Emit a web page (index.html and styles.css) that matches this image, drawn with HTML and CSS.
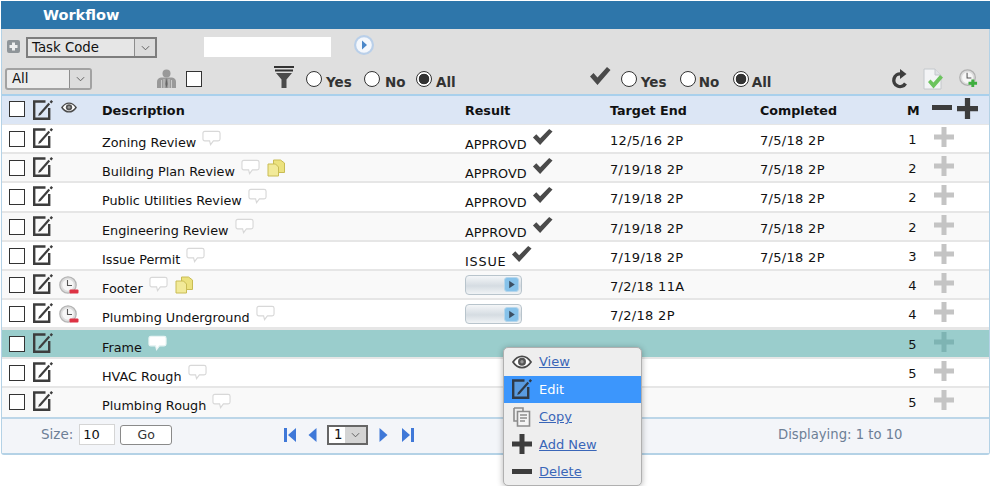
FILE: index.html
```html
<!DOCTYPE html>
<html lang="en">
<head>
<meta charset="utf-8">
<title>Workflow</title>
<link rel="stylesheet" href="styles.css">
</head>
<body>
<svg class="defs" width="0" height="0" aria-hidden="true">
  <defs>
    <symbol id="edit" viewBox="0 0 20 20">
      <path d="M12.500 1.500H1.200v17.300h15V8" fill="none" stroke="#3d3d3d" stroke-width="2.400"/>
      <path d="M6 13.500 15.500 2.800l1.600 1.400L7.600 15l-2.400 1z" fill="#3d3d3d"/>
      <rect x="17.200" y="0.300" width="2.400" height="2.400" fill="#3d3d3d" transform="rotate(40 18 1.500)"/>
    </symbol>
    <symbol id="editblue" viewBox="0 0 20 20">
      <rect x="1.200" y="1.500" width="15" height="17.300" fill="#5a9be0"/>
      <path d="M12.500 1.500H1.200v17.300h15V8" fill="none" stroke="#2f3a48" stroke-width="2.400"/>
      <path d="M6 13.500 15.500 2.800l1.600 1.400L7.600 15l-2.400 1z" fill="#2f3a48"/>
      <rect x="17.200" y="0.300" width="2.400" height="2.400" fill="#2f3a48" transform="rotate(40 18 1.500)"/>
    </symbol>
    <symbol id="eye" viewBox="0 0 20 14">
      <path d="M1 7c2.500-3.800 5.500-5.600 9-5.600S16.500 3.200 19 7c-2.500 3.800-5.500 5.600-9 5.600S3.500 10.800 1 7z" fill="#fff" stroke="#4a4a4a" stroke-width="1.800"/>
      <circle cx="10" cy="6.800" r="4" fill="#555"/>
      <circle cx="10" cy="6.800" r="1.700" fill="#999"/>
    </symbol>
    <symbol id="bubble" viewBox="0 0 20 16">
      <path d="M3 1h14q2 0 2 2v6q0 2-2 2h-5l-3 4-1-4H3q-2 0-2-2V3q0-2 2-2z" fill="#fff" stroke="#d8d8d8" stroke-width="1.200"/>
    </symbol>
    <symbol id="bubblew" viewBox="0 0 20 16">
      <path d="M3 1h14q2 0 2 2v6q0 2-2 2h-5l-3 4-1-4H3q-2 0-2-2V3q0-2 2-2z" fill="#fff" stroke="#e8f4f3" stroke-width="1.200"/>
    </symbol>
    <symbol id="notes" viewBox="0 0 18 18">
      <path d="M6.500 1h7l4 3v9.500h-11z" fill="#ece27e" stroke="#c9bc55"/>
      <path d="M1 5h7.500l3 3v9H1z" fill="#f2ea99" stroke="#c9bc55"/>
    </symbol>
    <symbol id="check" viewBox="0 0 22 20" preserveAspectRatio="none">
      <path d="M1 10.500 4.500 7l4 4.500L18 1l3.500 3L8.500 19z" fill="#4a4a4a"/>
    </symbol>
    <symbol id="plus" viewBox="0 0 20 20">
      <path d="M7.500 0h5v7.500H20v5h-7.500V20h-5v-7.500H0v-5h7.500z"/>
    </symbol>
    <symbol id="clockminus" viewBox="0 0 20 20">
      <circle cx="9" cy="9" r="8.200" fill="#dcdcdc" stroke="#b5b5b5" stroke-width="1.300"/>
      <circle cx="9" cy="9" r="5.800" fill="#f6f6f6"/>
      <path d="M8.500 4v5.500H13" fill="none" stroke="#555" stroke-width="1.100"/>
      <rect x="10.500" y="13.500" width="9" height="4" rx="1" fill="#dd3344"/>
    </symbol>
    <symbol id="clockplus" viewBox="0 0 20 20">
      <circle cx="9" cy="9" r="8.200" fill="#dcdcdc" stroke="#b0b0b0" stroke-width="1.300"/>
      <circle cx="9" cy="9" r="5.800" fill="#f6f6f6"/>
      <path d="M8.500 4v5.500H13" fill="none" stroke="#555" stroke-width="1.100"/>
      <path d="M13 11h3v2.500h3v3h-3V19h-3v-2.500h-3v-3h3z" fill="#3eae3e"/>
    </symbol>
    <symbol id="playmini" viewBox="0 0 16 16">
      <rect x="0.500" y="0.500" width="15" height="15" rx="3" fill="#86c2ea" stroke="#b5d6ec"/>
      <path d="M5.500 4v8l6-4z" fill="#3b4f63"/>
    </symbol>
    <symbol id="copy" viewBox="0 0 18 20">
      <path d="M1 1h9v3M1 1v13h3" fill="none" stroke="#8c8c8c" stroke-width="1.600"/>
      <path d="M4.500 4.500h12V19h-12z" fill="#f4f4f4" stroke="#8c8c8c" stroke-width="1.600"/>
      <path d="M7 8h7M7 11h7M7 14h5" stroke="#8c8c8c" stroke-width="1.300"/>
    </symbol>
    <symbol id="pfirst" viewBox="0 0 14 16">
      <path d="M1 1h3v14H1zM13 1v14L5 8z" fill="#3f78d8"/>
    </symbol>
    <symbol id="pprev" viewBox="0 0 9 16">
      <path d="M8.500 1v14L.5 8z" fill="#3f78d8"/>
    </symbol>
    <symbol id="pnext" viewBox="0 0 9 16">
      <path d="M.5 1v14l8-7z" fill="#3f78d8"/>
    </symbol>
    <symbol id="plast" viewBox="0 0 14 16">
      <path d="M13 1h-3v14h3zM1 1v14l8-7z" fill="#3f78d8"/>
    </symbol>
    <symbol id="chev" viewBox="0 0 10 6">
      <path d="M1 1l4 4 4-4" fill="none" stroke="#555" stroke-width="1"/>
    </symbol>
  </defs>
</svg>

<main class="panel">
  <h1 class="title">Workflow</h1>

  <section class="toolbar">
    <div class="bar bar-top">
      <svg class="ic-addbox" viewBox="0 0 13 13"><rect width="13" height="13" rx="2" fill="#8f9599"/><path d="M5 2.500h3V5h2.500v3H8v2.500H5V8H2.500V5H5z" fill="#f0f0f0"/></svg>
      <div class="select select-code"><span class="select-val">Task Code</span><span class="select-arrow"><svg class="chev"><use href="#chev"/></svg></span></div>
      <input class="search" type="text" aria-label="Search">
      <svg class="ic-go" viewBox="0 0 20 20"><circle cx="10" cy="10" r="10" fill="#b9cfe9"/><circle cx="10" cy="10" r="7.800" fill="#f4f7fc"/><path d="M8 5.500v9l5-4.500z" fill="#4a86c8"/></svg>
    </div>
    <div class="bar bar-bottom">
      <div class="select select-all"><span class="select-val">All</span><span class="select-arrow"><svg class="chev"><use href="#chev"/></svg></span></div>
      <svg class="ic-person" viewBox="0 0 19 20"><circle cx="9.500" cy="4.500" r="4" fill="#999"/><path d="M0 19v-6q0-4 4-4.500h11q4 .5 4 4.500v6z" fill="#999"/><path d="M4.500 11v8M7 10v9M12 10v9M14.500 11v8" stroke="#d5d5d5" stroke-width=".8"/><path d="M9.500 9l-1 6 1 4 1-4z" fill="#666"/></svg>
      <input class="cb cb-person" type="checkbox" aria-label="Mine">
      <svg class="ic-funnel" viewBox="0 0 20 22"><path d="M0 0h20v2H0zM1 3.500h18v2H1z" fill="#333"/><path d="M2 7h16l-5.500 6.500V22h-5v-8.500z" fill="#4a4a4a"/></svg>
      <div class="radios radios-a">
        <input class="rd" type="radio" name="f1" aria-label="Yes"><b class="rl rl-yes">Yes</b>
        <input class="rd" type="radio" name="f1" aria-label="No"><b class="rl rl-no">No</b>
        <input class="rd" type="radio" name="f1" aria-label="All" checked><b class="rl">All</b>
      </div>
      <svg class="ic-bigcheck"><use href="#check"/></svg>
      <div class="radios radios-b">
        <input class="rd" type="radio" name="f2" aria-label="Yes"><b class="rl rl-yes2">Yes</b>
        <input class="rd" type="radio" name="f2" aria-label="No"><b class="rl rl-no2">No</b>
        <input class="rd" type="radio" name="f2" aria-label="All" checked><b class="rl rl-all2">All</b>
      </div>
      <div class="tools">
        <svg class="ic-refresh" viewBox="0 0 18 20"><path d="M14.500 14.500A6.300 6.300 0 1 1 10 5" fill="none" stroke="#3d3d3d" stroke-width="3.400"/><path d="M9 0v10l6.500-5z" fill="#3d3d3d"/></svg>
        <svg class="ic-doc" viewBox="0 0 20 22"><path d="M1 1h11l6 6v14H1z" fill="#f3f4f6" stroke="#c4c8cc"/><path d="M12 1v6h6" fill="#dfe2e6" stroke="#c4c8cc"/><path d="M5 14l2.500-2.500 3 3L17 7l3 2.500-9.500 11z" fill="#6cc45e"/></svg>
        <svg class="ic-clockplus"><use href="#clockplus"/></svg>
      </div>
    </div>
  </section>

  <div class="row head">
    <span class="c-cb"><input class="cb" type="checkbox" aria-label="All rows"></span>
    <svg class="ic-edit"><use href="#edit"/></svg>
    <span class="c-x"><svg class="ic-eye"><use href="#eye"/></svg></span>
    <span class="c-desc">Description</span>
    <span class="c-res">Result</span>
    <span class="c-end">Target End</span>
    <span class="c-done">Completed</span>
    <span class="c-m">M</span>
    <span class="c-exp">
      <svg class="ic-minus" viewBox="0 0 20 6"><rect width="20" height="5" fill="#3d3d3d"/></svg>
      <svg class="ic-plus dark"><use href="#plus"/></svg>
    </span>
  </div>

  <div class="row">
    <span class="c-cb"><input class="cb" type="checkbox" aria-label="Select"></span>
    <svg class="ic-edit"><use href="#edit"/></svg><span class="c-x"></span>
    <span class="c-desc"><span class="desc-t">Zoning Review</span><svg class="ic-bub"><use href="#bubble"/></svg></span>
    <span class="c-res"><span class="res-t">APPROVD</span><svg class="ic-check"><use href="#check"/></svg></span>
    <span class="c-end">12/5/16 2P</span><span class="c-done">7/5/18 2P</span><span class="c-m">1</span>
    <span class="c-exp"><svg class="ic-plus"><use href="#plus"/></svg></span>
  </div>
  <div class="row alt">
    <span class="c-cb"><input class="cb" type="checkbox" aria-label="Select"></span>
    <svg class="ic-edit"><use href="#edit"/></svg><span class="c-x"></span>
    <span class="c-desc"><span class="desc-t">Building Plan Review</span><svg class="ic-bub"><use href="#bubble"/></svg><svg class="ic-notes"><use href="#notes"/></svg></span>
    <span class="c-res"><span class="res-t">APPROVD</span><svg class="ic-check"><use href="#check"/></svg></span>
    <span class="c-end">7/19/18 2P</span><span class="c-done">7/5/18 2P</span><span class="c-m">2</span>
    <span class="c-exp"><svg class="ic-plus"><use href="#plus"/></svg></span>
  </div>
  <div class="row">
    <span class="c-cb"><input class="cb" type="checkbox" aria-label="Select"></span>
    <svg class="ic-edit"><use href="#edit"/></svg><span class="c-x"></span>
    <span class="c-desc"><span class="desc-t">Public Utilities Review</span><svg class="ic-bub"><use href="#bubble"/></svg></span>
    <span class="c-res"><span class="res-t">APPROVD</span><svg class="ic-check"><use href="#check"/></svg></span>
    <span class="c-end">7/19/18 2P</span><span class="c-done">7/5/18 2P</span><span class="c-m">2</span>
    <span class="c-exp"><svg class="ic-plus"><use href="#plus"/></svg></span>
  </div>
  <div class="row alt">
    <span class="c-cb"><input class="cb" type="checkbox" aria-label="Select"></span>
    <svg class="ic-edit"><use href="#edit"/></svg><span class="c-x"></span>
    <span class="c-desc"><span class="desc-t">Engineering Review</span><svg class="ic-bub"><use href="#bubble"/></svg></span>
    <span class="c-res"><span class="res-t">APPROVD</span><svg class="ic-check"><use href="#check"/></svg></span>
    <span class="c-end">7/19/18 2P</span><span class="c-done">7/5/18 2P</span><span class="c-m">2</span>
    <span class="c-exp"><svg class="ic-plus"><use href="#plus"/></svg></span>
  </div>
  <div class="row">
    <span class="c-cb"><input class="cb" type="checkbox" aria-label="Select"></span>
    <svg class="ic-edit"><use href="#edit"/></svg><span class="c-x"></span>
    <span class="c-desc"><span class="desc-t">Issue Permit</span><svg class="ic-bub"><use href="#bubble"/></svg></span>
    <span class="c-res"><span class="res-t res-issue">ISSUE</span><svg class="ic-check"><use href="#check"/></svg></span>
    <span class="c-end">7/19/18 2P</span><span class="c-done">7/5/18 2P</span><span class="c-m">3</span>
    <span class="c-exp"><svg class="ic-plus"><use href="#plus"/></svg></span>
  </div>
  <div class="row alt">
    <span class="c-cb"><input class="cb" type="checkbox" aria-label="Select"></span>
    <svg class="ic-edit"><use href="#edit"/></svg>
    <span class="c-x"><svg class="ic-clock"><use href="#clockminus"/></svg></span>
    <span class="c-desc"><span class="desc-t">Footer</span><svg class="ic-bub"><use href="#bubble"/></svg><svg class="ic-notes"><use href="#notes"/></svg></span>
    <span class="c-res"><span class="play"><svg class="ic-playmini"><use href="#playmini"/></svg></span></span>
    <span class="c-end">7/2/18 11A</span><span class="c-done"></span><span class="c-m">4</span>
    <span class="c-exp"><svg class="ic-plus"><use href="#plus"/></svg></span>
  </div>
  <div class="row">
    <span class="c-cb"><input class="cb" type="checkbox" aria-label="Select"></span>
    <svg class="ic-edit"><use href="#edit"/></svg>
    <span class="c-x"><svg class="ic-clock"><use href="#clockminus"/></svg></span>
    <span class="c-desc"><span class="desc-t">Plumbing Underground</span><svg class="ic-bub"><use href="#bubble"/></svg></span>
    <span class="c-res"><span class="play"><svg class="ic-playmini"><use href="#playmini"/></svg></span></span>
    <span class="c-end">7/2/18 2P</span><span class="c-done"></span><span class="c-m">4</span>
    <span class="c-exp"><svg class="ic-plus"><use href="#plus"/></svg></span>
  </div>
  <div class="row selected">
    <span class="c-cb"><input class="cb" type="checkbox" aria-label="Select"></span>
    <svg class="ic-edit"><use href="#edit"/></svg><span class="c-x"></span>
    <span class="c-desc"><span class="desc-t">Frame</span><svg class="ic-bub"><use href="#bubblew"/></svg></span>
    <span class="c-res"></span><span class="c-end"></span><span class="c-done"></span><span class="c-m">5</span>
    <span class="c-exp"><svg class="ic-plus"><use href="#plus"/></svg></span>
  </div>
  <div class="row">
    <span class="c-cb"><input class="cb" type="checkbox" aria-label="Select"></span>
    <svg class="ic-edit"><use href="#edit"/></svg><span class="c-x"></span>
    <span class="c-desc"><span class="desc-t">HVAC Rough</span><svg class="ic-bub"><use href="#bubble"/></svg></span>
    <span class="c-res"></span><span class="c-end"></span><span class="c-done"></span><span class="c-m">5</span>
    <span class="c-exp"><svg class="ic-plus"><use href="#plus"/></svg></span>
  </div>
  <div class="row alt last">
    <span class="c-cb"><input class="cb" type="checkbox" aria-label="Select"></span>
    <svg class="ic-edit"><use href="#edit"/></svg><span class="c-x"></span>
    <span class="c-desc"><span class="desc-t">Plumbing Rough</span><svg class="ic-bub"><use href="#bubble"/></svg></span>
    <span class="c-res"></span><span class="c-end"></span><span class="c-done"></span><span class="c-m">5</span>
    <span class="c-exp"><svg class="ic-plus"><use href="#plus"/></svg></span>
  </div>

  <footer class="foot">
    <div class="size">
      <span class="size-l">Size:</span>
      <input class="size-i" type="text" value="10" aria-label="Size">
      <button class="go" type="button">Go</button>
    </div>
    <div class="pager">
      <svg class="pg pg-first"><use href="#pfirst"/></svg>
      <svg class="pg pg-prev"><use href="#pprev"/></svg>
      <div class="select select-page"><span class="select-val">1</span><span class="select-arrow"><svg class="chev"><use href="#chev"/></svg></span></div>
      <svg class="pg pg-next"><use href="#pnext"/></svg>
      <svg class="pg pg-last"><use href="#plast"/></svg>
    </div>
    <div class="showing">Displaying: 1 to 10</div>
  </footer>

  <nav class="menu">
    <a class="mi" href="#"><svg class="mi-ic mi-eye"><use href="#eye"/></svg><span>View</span></a>
    <a class="mi on" href="#"><svg class="mi-ic mi-edit"><use href="#editblue"/></svg><span>Edit</span></a>
    <a class="mi" href="#"><svg class="mi-ic mi-copy"><use href="#copy"/></svg><span>Copy</span></a>
    <a class="mi" href="#"><svg class="mi-ic mi-plus"><use href="#plus"/></svg><span>Add New</span></a>
    <a class="mi" href="#"><svg class="mi-ic mi-minus" viewBox="0 0 20 6"><rect width="20" height="5" fill="#3d3d3d"/></svg><span>Delete</span></a>
  </nav>
</main>
</body>
</html>
```

FILE: styles.css
```css
* { box-sizing: border-box; }
html, body { margin: 0; padding: 0; background: #fff; height: 486px; overflow: hidden; }
body { font-family: "DejaVu Sans", Verdana, sans-serif; font-size: 13px; color: #111; }
.defs { display: block; height: 0; }
svg { display: block; flex: none; }

.panel {
  position: relative;
  margin: 1px 0 0 1px;
  width: 989px;
  height: 454px;
  border-left: 1px solid #b4d2e6;
  border-right: 1px solid #b4d2e6;
  border-bottom: 2px solid #b4d2e6;
  border-radius: 0 0 3px 3px;
}

.title {
  margin: 0 0 0 -1px;
  width: 989px;
  height: 28px;
  padding: 6px 0 0 42px;
  background: #2e76aa;
  color: #fff;
  font-size: 14.500px;
  line-height: 17px;
  font-weight: 700;
}

.toolbar { height: 67px; background: #dfdfdf; border-bottom: 2px solid #a9d0ec; }
.bar { display: flex; align-items: flex-start; }
.bar-top { height: 37px; padding-left: 5px; }
.bar-bottom { height: 28px; padding-left: 3px; }

.ic-addbox { width: 13px; height: 13px; margin-top: 11px; }
.select {
  display: flex;
  align-items: stretch;
  background: #e6e6e6;
  border: 2px solid #7d7d7d;
  font-size: 13.300px;
  line-height: 17px;
}
.select-val { flex: 1; padding-left: 4px; }
.select-arrow {
  width: 21px;
  display: flex;
  align-items: center;
  justify-content: center;
  background: #dcdcdc;
  border-left: 1px solid #8d8d8d;
}
.chev { width: 9px; height: 6px; }
.select-code { width: 131px; height: 21px; margin: 8px 0 0 6px; }
.search { width: 127px; height: 20px; margin: 8px 0 0 47px; border: 0; background: #fff; padding: 0; }
.ic-go { width: 20px; height: 20px; margin: 6px 0 0 23px; }

.select-all { width: 87px; height: 22px; margin-top: 2px; border: 2px solid #a2a2a2; border-radius: 3px; background: #ececec; line-height: 18px; }
.select-all .select-val { padding-left: 5px; }
.ic-person { width: 19px; height: 20px; margin: 3px 0 0 65px; }
input.cb, input.rd { appearance: none; -webkit-appearance: none; margin: 0; flex: none; }
input.cb { display: block; width: 16px; height: 16px; background: #fff; border: 1px solid #333; }
input.cb-person { margin: 5px 0 0 10px; }
.ic-funnel { width: 20px; height: 22px; margin: 0 0 0 72px; }

.radios { display: flex; align-items: flex-start; }
.radios-a { margin-left: 12px; }
.radios-b { margin-left: 10px; }
input.rd { width: 16px; height: 16px; margin-top: 5px; border-radius: 50%; border: 1px solid #333; background: #fff; }
input.rd:checked { background: radial-gradient(circle, #333 0 5px, #fff 5.600px); }
.rl { margin: 9px 0 0 4px; font-size: 13.500px; line-height: 15px; color: #333; }
.rl-yes { width: 38px; }
.rl-no { width: 31px; margin-left: 5px; }
.rl-yes2 { width: 39px; }
.rl-no2 { width: 34px; margin-left: 3px; }
.rl-all2 { margin-left: 3px; }
.ic-bigcheck { width: 22px; height: 20px; margin: 0 0 0 133px; }
.tools { display: flex; align-items: flex-start; margin-left: auto; padding-right: 11px; }
.ic-refresh { width: 18px; height: 20px; margin-top: 3px; }
.ic-doc { width: 20px; height: 22px; margin: 2px 0 0 14px; }
.ic-clockplus { width: 19px; height: 19px; margin: 3px 0 0 16px; }

.row {
  display: grid;
  grid-template-columns: 24px 26px 43px 363px 145px 150px 147px 27px 1fr;
  height: 29.200px;
  padding-left: 7px;
  background: #fff;
  border-bottom: 2px solid #e6e6e6;
  line-height: 15px;
}
.row.alt { background: #f9f9f9; }
.row.selected { background: #9acdcc; border-top: 1px solid #e6e6e6; }
.row.last { border-bottom: 0; }
.row.head {
  height: 29px;
  background: #dce6f5;
  border-bottom: 1px solid #e6e6e6;
  font-weight: 700;
  font-size: 12.700px;
}
.row.head > span { padding-top: 7px; }

.row > .c-cb { padding-top: 6px; }
.row > .ic-edit { width: 20px; height: 20px; margin-top: 3px; }
.ic-eye { width: 16px; height: 11px; margin-left: 2px; }
.row.head > .c-x { padding-top: 6px; }
.row.head > .c-cb { padding-top: 5px; }
.row.head > .ic-edit { margin-top: 4px; }
.c-desc { display: flex; align-items: flex-start; font-size: 12.800px; }
.desc-t { margin-top: 10px; }
.ic-bub { width: 19px; height: 16px; margin: 5px 0 0 6px; }
.ic-notes { width: 18px; height: 18px; margin: 5px 0 0 7px; }
.c-res { display: flex; align-items: flex-start; }
.res-t { margin-top: 12px; font-size: 12.800px; }
.res-issue { letter-spacing: .8px; }
.ic-check { width: 21px; height: 18px; margin: 3px 0 0 5px; }
.row:not(.head) > .c-end, .row:not(.head) > .c-done { padding-top: 8px; letter-spacing: .3px; }
.c-m { width: 11px; text-align: center; padding-top: 7px; }
.c-exp { display: flex; align-items: flex-start; }
.ic-plus { width: 20px; height: 20px; margin-top: 2px; fill: #c4c4c4; }
.ic-plus.dark { fill: #3d3d3d; margin-top: 0; width: 21px; height: 21px; }
.row.selected .ic-plus { fill: #7eb4b3; }
.ic-minus { width: 20px; height: 6px; margin: 7px 5px 0 -2px; }
.row.head > .c-exp { padding-top: 2px; }
.ic-clock { width: 20px; height: 20px; margin-top: 5px; }
.play {
  display: flex;
  justify-content: flex-end;
  align-items: center;
  width: 57px;
  height: 20px;
  margin-top: 4px;
  padding-right: 2px;
  border: 1px solid #b8c4cc;
  border-radius: 4px;
  background: linear-gradient(#f4f6f8, #d5dce2 55%, #f0f3f5);
}
.ic-playmini { width: 15px; height: 15px; }

.foot {
  display: grid;
  grid-template-columns: 281px 495px 1fr;
  height: 36px;
  background: #f3f5f9;
  border-top: 2px solid #bcd6e8;
}
.size { display: flex; align-items: flex-start; padding-left: 39px; }
.size-l { margin-top: 8px; color: #6d7f96; font-size: 13.500px; line-height: 15px; }
.size-i { width: 36px; height: 21px; margin: 5px 0 0 6px; padding: 0 0 0 3px; border: 1px solid #d5d5d5; background: #fff; font: 13px "DejaVu Sans", sans-serif; color: #111; }
.go { width: 52px; height: 20px; margin: 6px 0 0 5px; padding: 0; border: 1px solid #8a8a8a; border-radius: 3px; background: #fff; font: 12.500px "DejaVu Sans", sans-serif; color: #333; }
.pager { display: flex; align-items: flex-start; }
.pg { height: 16px; margin-top: 8px; }
.pg-first { width: 14px; }
.pg-prev { width: 9px; margin-left: 11px; margin-right: 10px; }
.pg-next { width: 9px; margin-left: 11px; }
.pg-last { width: 14px; margin-left: 13px; }
.select-page { width: 41px; height: 20px; margin-top: 6px; border: 2px solid #666; background: #fff; line-height: 16px; }
.select-page .select-val { padding-left: 5px; }
.select-page .select-arrow { border-left: 0; background: #d4d4d4; }
.showing { padding-top: 8px; color: #6d7f96; font-size: 13.200px; line-height: 15px; }

.menu {
  position: absolute;
  left: 501px;
  top: 346px;
  width: 139px;
  height: 139px;
  background: #eee;
  border: 1px solid #b0b0b0;
  border-radius: 5px;
  box-shadow: 0 1px 6px rgba(0,0,0,.3);
}
.mi { display: flex; align-items: center; height: 27.500px; padding-left: 8px; color: #3a66b8; font-size: 13px; text-decoration: underline; }
.mi.on { background: #3c96fc; color: #fff; text-decoration: none; }
.mi-ic { width: 20px; height: 20px; margin-right: 7px; }
.mi-eye { height: 14px; }
.mi-plus { fill: #3d3d3d; }
.mi-minus { height: 6px; }
```
